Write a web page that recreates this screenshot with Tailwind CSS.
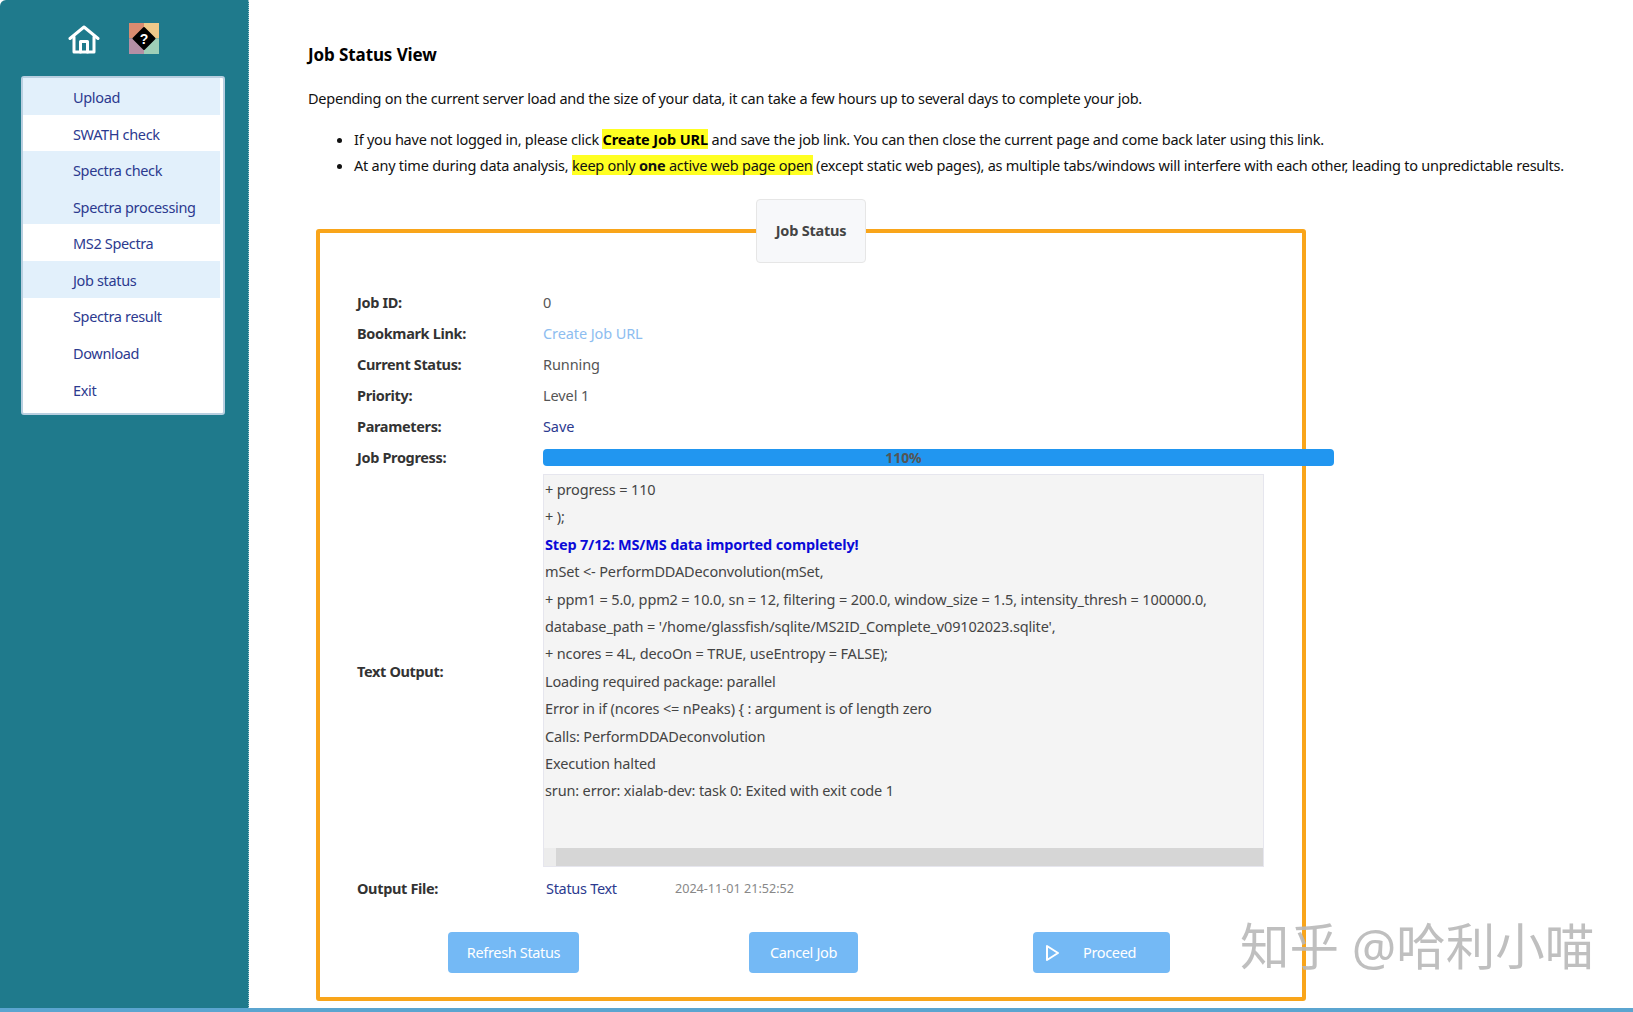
<!DOCTYPE html>
<html><head><meta charset="utf-8"><script src="https://cdn.jsdelivr.net/npm/@tailwindcss/browser@4"></script></head>
<body class="m-0 bg-white overflow-hidden">
<div class="relative w-[1633px] h-[1012px] overflow-hidden flex flex-col font-['Noto_Sans','Noto_Sans_CJK_SC',sans-serif] text-[14.5px] tracking-[-0.24px] text-[#222]">
  <div class="flex h-[1008px]">
    <aside class="w-[249px] shrink-0 bg-[#1f7a8c] rounded-tl-md border-r border-dotted border-[#9cc4cc] pt-[23px] pl-[21px]">
      <div class="flex items-center h-[31px] pl-[47px] gap-[29px]">
        <svg class="w-[32px] h-[30px]" viewBox="0 0 32 30" fill="none" stroke="#fff" stroke-width="3" stroke-linejoin="round" stroke-linecap="round"><path d="M2 14.5 16 3l14 11.5"/><path d="M6 13v15h20V13"/><path d="M12.5 28V17.5h7V28"/></svg>
        <svg class="w-[30px] h-[31px]" viewBox="0 0 30 31"><rect width="15" height="15.5" fill="#d98b70"/><rect x="15" width="15" height="15.5" fill="#eec98a"/><rect y="15.5" width="15" height="15.5" fill="#b58fa5"/><rect x="15" y="15.5" width="15" height="15.5" fill="#9fcfb8"/><path d="M15 5l10.5 10.5L15 26 4.500 15.500z" fill="#000" stroke="#000" stroke-width="2" stroke-linejoin="round"/><text x="15" y="20.500" text-anchor="middle" font-size="14" font-weight="700" fill="#fff" font-family="Liberation Sans">?</text></svg>
      </div>
      <nav class="mt-[22px] w-[204px] h-[339px] bg-white rounded-[3px] border-2 border-[#b9cfe0] pr-[3px] text-[#2c3a8f] text-[14.5px] tracking-[-0.35px]">
        <a class="flex items-center h-[36.600px] pl-[50px] pt-[3px] bg-[#e2f0fb]">Upload</a>
        <a class="flex items-center h-[36.600px] pl-[50px] pt-[3px]">SWATH check</a>
        <a class="flex items-center h-[36.600px] pl-[50px] pt-[3px] bg-[#e2f0fb]">Spectra check</a>
        <a class="flex items-center h-[36.600px] pl-[50px] pt-[3px] bg-[#e2f0fb]">Spectra processing</a>
        <a class="flex items-center h-[36.600px] pl-[50px] pt-[3px]">MS2 Spectra</a>
        <a class="flex items-center h-[36.600px] pl-[50px] pt-[3px] bg-[#e2f0fb]">Job status</a>
        <a class="flex items-center h-[36.600px] pl-[50px] pt-[3px]">Spectra result</a>
        <a class="flex items-center h-[36.600px] pl-[50px] pt-[3px]">Download</a>
        <a class="flex items-center h-[36.600px] pl-[50px] pt-[3px]">Exit</a>
      </nav>
    </aside>
    <main class="flex-1 pl-[59px] pt-[44px]">
      <h1 class="font-bold text-[17px] tracking-[-0.1px] text-black leading-[22px] m-0">Job Status View</h1>
      <p class="mt-[21px] leading-[22px] text-[#111]">Depending on the current server load and the size of your data, it can take a few hours up to several days to complete your job.</p>
      <ul class="mt-[17px] ml-[26px] pl-[20px] list-disc text-[#111] leading-[26px]">
        <li>If you have not logged in, please click <b class="bg-[#ffff22] text-black tracking-[-0.1px]">Create Job URL</b> and save the job link. You can then close the current page and come back later using this link.</li>
        <li>At any time during data analysis, <span class="bg-[#ffff22]">keep only <b>one</b> active web page open</span> (except static web pages), as multiple tabs/windows will interfere with each other, leading to unpredictable results.</li>
      </ul>
      <section class="relative mt-[51px] ml-[8px] w-[990px] h-[772px] border-4 border-[#f9a51a] rounded-[3px] pl-[37px] pt-[55px]">
        <div class="absolute left-[436px] top-[-34px] w-[110px] h-[64px] bg-[#f7f8fa] border border-[#e6e6e6] rounded-[4px] flex items-center justify-center font-bold text-[#444]">Job Status</div>
        <div class="grid grid-cols-[186px_1fr] items-center text-[#555] tracking-[-0.1px]">
          <b class="h-[30px] flex items-center text-[#333] tracking-[-0.35px]">Job ID:</b><span>0</span>
          <b class="h-[31px] flex items-center text-[#333] tracking-[-0.35px]">Bookmark Link:</b><span class="text-[#8dbdf0]">Create Job URL</span>
          <b class="h-[32px] flex items-center text-[#333] tracking-[-0.35px]">Current Status:</b><span>Running</span>
          <b class="h-[30px] flex items-center text-[#333] tracking-[-0.35px]">Priority:</b><span>Level 1</span>
          <b class="h-[31px] flex items-center text-[#333] tracking-[-0.35px]">Parameters:</b><span class="text-[#2c3a8f]">Save</span>
          <b class="h-[31px] flex items-center text-[#333] tracking-[-0.35px]">Job Progress:</b>
          <div class="relative w-[791px] h-[17px] bg-[#2196f0] rounded-[4px] flex items-center justify-center pr-[70px] text-[#555] font-bold text-[14px]">110%</div>
          <b class="flex items-center text-[#333] tracking-[-0.35px] pt-[4px]">Text Output:</b>
          <div class="mt-[1px] w-[721px] h-[393px] bg-[#f4f4f4] border border-[#e6e6ee] flex flex-col">
            <div class="flex-1 pl-[1px] pt-[1px] text-[#444] leading-[27.400px] tracking-[-0.15px]">
              <div>+ progress = 110</div>
              <div>+ );</div>
              <div class="font-bold text-[#0a0ad8]">Step 7/12: MS/MS data imported completely!</div>
              <div>mSet &lt;- PerformDDADeconvolution(mSet,</div>
              <div>+ ppm1 = 5.0, ppm2 = 10.0, sn = 12, filtering = 200.0, window_size = 1.5, intensity_thresh = 100000.0,</div>
              <div>database_path = '/home/glassfish/sqlite/MS2ID_Complete_v09102023.sqlite',</div>
              <div>+ ncores = 4L, decoOn = TRUE, useEntropy = FALSE);</div>
              <div>Loading required package: parallel</div>
              <div>Error in if (ncores &lt;= nPeaks) { : argument is of length zero</div>
              <div>Calls: PerformDDADeconvolution</div>
              <div>Execution halted</div>
              <div>srun: error: xialab-dev: task 0: Exited with exit code 1</div>
            </div>
            <div class="h-[18px] bg-[#ececec] pl-[12px]"><div class="h-full bg-[#d6d6d6]"></div></div>
          </div>
          <b class="h-[44px] flex items-center text-[#333] tracking-[-0.35px]">Output File:</b>
          <div class="flex items-center pl-[3px]"><span class="text-[#2c3a8f] w-[129px] tracking-[-0.3px]">Status Text</span><span class="text-[12.6px] text-[#888] tracking-normal">2024-11-01 21:52:52</span></div>
        </div>
        <div class="flex mt-[21px] ml-[91px] text-white tracking-[-0.35px]">
          <button class="w-[131px] h-[41px] bg-[#74b9f5] rounded-[4px]">Refresh Status</button>
          <button class="ml-[170px] w-[109px] h-[41px] bg-[#74b9f5] rounded-[4px]">Cancel Job</button>
          <button class="ml-[175px] w-[137px] h-[41px] bg-[#74b9f5] rounded-[4px] flex items-center pl-[12px]">
            <svg class="w-[16px] h-[18px]" viewBox="0 0 16 18" fill="none" stroke="#fff" stroke-width="2" stroke-linejoin="round"><path d="M2 2l11 7-11 7z"/></svg>
            <span class="ml-[22px]">Proceed</span>
          </button>
        </div>
      </section>
    </main>
  </div>
  <div class="h-[4px] bg-[#5ba5d0]"></div>
  <div class="absolute left-[1240px] top-[918px] text-[49.500px] tracking-normal leading-[56px] text-[#b8b8b8]/90 whitespace-nowrap">知乎 @哈利小喵</div>
</div>
</body></html>
